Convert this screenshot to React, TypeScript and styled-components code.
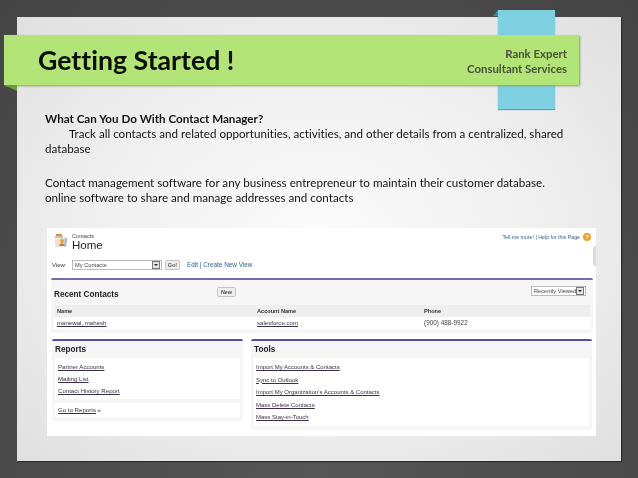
import React from "react";
import styled, { createGlobalStyle } from "styled-components";

const Global = createGlobalStyle`
  html, body { margin: 0; padding: 0; }
  body {
    width: 638px; height: 478px; overflow: hidden;
    background: radial-gradient(ellipse at 50% 100%, #565656 0%, #4c4c4c 60%, #444 100%);
    font-family: "Lato", "Liberation Sans", sans-serif;
    font-variant-ligatures: none;
  }
`;

const Slide = styled.div`
  position: relative;
  box-sizing: border-box;
  margin: 17px 0 0 17px;
  width: 604px;
  height: 444px;
  padding-top: 18px;
  background: radial-gradient(ellipse at 50% 50%, #fbfbfb 0%, #f2f2f2 45%, #e0e0e0 100%);
  box-shadow: 1px 1px 1px #2c2c2c;
`;

const BlueTab = styled.div`
  position: absolute;
  left: 481px;
  top: -7px;
  width: 57px;
  height: 99px;
  background: #7fd0e0;
  box-shadow: 0 1px 1px #6a9aa8;
  &::before {
    content: "";
    position: absolute;
    left: -5px;
    top: 0;
    border-style: solid;
    border-width: 0 0 6px 5px;
    border-color: transparent transparent #3f8fa3 transparent;
  }
`;

const Band = styled.header`
  position: relative;
  box-sizing: border-box;
  margin-left: -13px;
  width: 575px;
  height: 50px;
  padding: 0 12px 0 34px;
  display: flex;
  align-items: center;
  justify-content: space-between;
  background: #b3e477;
  box-shadow: 1px 1px 2px #8a9a78;
  &::after {
    content: "";
    position: absolute;
    left: 0;
    top: 100%;
    border-style: solid;
    border-width: 0 13px 6px 0;
    border-color: transparent #6c9a3c transparent transparent;
  }
`;

const Title = styled.h1`
  margin: 0;
  font-size: 26.7px;
  line-height: 50px;
  font-weight: 700;
  color: #0b0f05;
  white-space: pre;
  filter: blur(0.3px);
`;

const Company = styled.div`
  text-align: right;
  font-size: 11.4px;
  line-height: 15px;
  font-weight: 700;
  color: #47533a;
  padding-top: 1px;
  filter: blur(0.25px);
`;

const Copy = styled.section`
  padding: 26px 50px 0 28px;
  height: 117px;
  box-sizing: content-box;
  font-size: 11.63px;
  line-height: 15px;
  color: #141414;
  filter: blur(0.2px);
`;

const Line = styled.div<{ $indent?: boolean; $gap?: boolean; $bold?: boolean }>`
  white-space: nowrap;
  padding-left: ${(p) => (p.$indent ? "24px" : "0")};
  margin-top: ${(p) => (p.$gap ? "19px" : "0")};
  font-weight: ${(p) => (p.$bold ? 700 : 400)};
`;

const Shot = styled.main`
  position: relative;
  box-sizing: border-box;
  margin-left: 30px;
  width: 549px;
  height: 208px;
  background: #fff;
  padding: 5px 3px 0 4px;
  font-family: "Liberation Sans", sans-serif;
  font-size: 6px;
  color: #333;
  filter: blur(0.35px);
`;

const ShotHead = styled.div`
  display: flex;
  justify-content: space-between;
  height: 26px;
  padding-left: 3px;
`;

const HeadLeft = styled.div`
  display: flex;
  gap: 4px;
`;

const Crumb = styled.div`
  font-size: 5.6px;
  line-height: 7px;
  color: #444;
`;

const PageName = styled.div`
  font-size: 11.5px;
  line-height: 11px;
  color: #222;
`;

const Help = styled.div`
  display: flex;
  align-items: center;
  gap: 3px;
  height: 8px;
  padding-right: 2px;
  color: #2f5f88;
  font-size: 5.25px;
`;

const HelpDot = styled.span`
  width: 8px;
  height: 8px;
  border-radius: 50%;
  background: #eca02a;
  color: #fff;
  font-size: 6px;
  font-weight: 700;
  text-align: center;
  line-height: 8px;
`;

const ViewRow = styled.div`
  display: flex;
  align-items: center;
  height: 11px;
  padding-left: 1px;
  margin-bottom: 8px;
`;

const ViewLabel = styled.span`
  width: 20px;
  font-size: 6px;
  color: #333;
`;

const Select = styled.div<{ $w: number }>`
  box-sizing: border-box;
  display: flex;
  align-items: center;
  justify-content: space-between;
  width: ${(p) => p.$w}px;
  height: 10px;
  padding: 0 1px 0 2px;
  background: #fff;
  border: 1px solid #bbb;
  font-size: 5.7px;
  color: #444;
  white-space: nowrap;
`;

const Arrow = styled.span`
  box-sizing: border-box;
  flex: none;
  width: 8px;
  height: 8px;
  background: #e4e4e4;
  border: 1px solid #777;
  display: flex;
  align-items: center;
  justify-content: center;
  &::after {
    content: "";
    border-style: solid;
    border-width: 2px 2px 0 2px;
    border-color: #222 transparent transparent transparent;
  }
`;

const Btn = styled.span`
  box-sizing: border-box;
  display: inline-flex;
  align-items: center;
  justify-content: center;
  height: 10px;
  border: 1px solid #c4c4c4;
  border-radius: 2px;
  background: #eee;
  font-size: 5.4px;
  font-weight: 700;
  color: #555;
`;

const GoBtn = styled(Btn)`
  width: 15px;
  margin: 0 7px 0 3px;
`;

const ViewLinks = styled.span`
  color: #2f6298;
  font-size: 6.4px;
`;

const Panel = styled.section<{ $accent: string; $h: number }>`
  box-sizing: border-box;
  height: ${(p) => p.$h}px;
  background: #f6f6f6;
  border-top: 2px solid ${(p) => p.$accent};
  border-radius: 2px 2px 3px 3px;
  padding: 0 3px;
`;

const RecentBar = styled.div`
  display: grid;
  grid-template-columns: 163px 1fr auto;
  align-items: center;
  height: 25px;
  padding-right: 4px;
`;

const PanelTitle = styled.h2`
  margin: 0;
  font-size: 8.2px;
  font-weight: 700;
  color: #222;
`;

const RecentTitle = styled(PanelTitle)`
  padding-top: 3px;
`;

const NewBtn = styled(Btn)`
  width: 19px;
  margin-top: -3px;
`;

const SortWrap = styled.div`
  margin-top: -3px;
`;

const Table = styled.div`
  display: grid;
  grid-template-columns: 200px 167px 1fr;
`;

const HeadCell = styled.div`
  height: 12px;
  line-height: 12px;
  padding-left: 3px;
  background: #eeeeee;
  font-size: 5.6px;
  font-weight: 700;
  color: #333;
`;

const Cell = styled.div`
  height: 12px;
  line-height: 12px;
  padding-left: 3px;
  background: #fff;
  font-size: 6.4px;
  color: #444;
`;

const Link = styled.span`
  color: #3a3048;
  font-size: 6.1px;
  text-decoration: underline;
  white-space: nowrap;
`;

const ToolLink = styled(Link)`
  font-size: 6px;
`;

const Columns = styled.div`
  display: grid;
  grid-template-columns: 191px 341px;
  gap: 8px;
  align-items: start;
  margin: 6px 0 0 1px;
`;

const SideTitle = styled(PanelTitle)`
  height: 17px;
  line-height: 18px;
`;

const LinkBox = styled.div<{ $h: number; $step: number; $mb?: number; $left?: number }>`
  box-sizing: border-box;
  height: ${(p) => p.$h}px;
  margin-bottom: ${(p) => p.$mb ?? 0}px;
  padding: 3px 0 0 ${(p) => p.$left ?? 3}px;
  background: #fff;
  display: flex;
  flex-direction: column;
  align-items: flex-start;
  & > span {
    height: ${(p) => p.$step}px;
    line-height: ${(p) => p.$step}px;
  }
`;

const Grip = styled.div`
  position: absolute;
  right: 0;
  top: 18px;
  width: 3px;
  height: 20px;
  background: #dcdcdc;
  border-radius: 2px 0 0 2px;
`;

const ContactsIcon = () => (
  <svg width="14" height="15" viewBox="0 0 14 15">
    <rect x="1" y="5" width="12" height="9" fill="#e9e4d2" transform="rotate(-6 7 9)" />
    <rect x="2" y="1" width="6" height="2" fill="#e88b3a" />
    <rect x="1" y="3" width="8" height="2" fill="#c9c3ad" />
    <circle cx="8" cy="8" r="2" fill="#e6a23c" />
    <path d="M5 13l2-3 3 1 1 2z" fill="#d9743a" />
    <path d="M11 5l2 0-1 8-2 1z" fill="#a9b4c4" />
  </svg>
);

export default function App() {
  return (
    <>
      <Global />
      <Slide>
        <BlueTab />
        <Band>
          <Title>Getting Started !</Title>
          <Company>
            <div>Rank Expert</div>
            <div>Consultant Services</div>
          </Company>
        </Band>
        <Copy>
          <Line $bold>What Can You Do With Contact Manager?</Line>
          <Line $indent>Track all contacts and related opportunities, activities, and other details from a centralized, shared</Line>
          <Line>database</Line>
          <Line $gap>Contact management software for any business entrepreneur to maintain their customer database.</Line>
          <Line>online software to share and manage addresses and contacts</Line>
        </Copy>
        <Shot>
          <Grip />
          <ShotHead>
            <HeadLeft>
              <ContactsIcon />
              <div>
                <Crumb>Contacts</Crumb>
                <PageName>Home</PageName>
              </div>
            </HeadLeft>
            <Help>
              <span>Tell me more! | Help for this Page</span>
              <HelpDot>?</HelpDot>
            </Help>
          </ShotHead>
          <ViewRow>
            <ViewLabel>View:</ViewLabel>
            <Select $w={90}>
              <span>My Contacts</span>
              <Arrow />
            </Select>
            <GoBtn>Go!</GoBtn>
            <ViewLinks>Edit | Create New View</ViewLinks>
          </ViewRow>
          <Panel $accent="#7a68a8" $h={55}>
            <RecentBar>
              <RecentTitle>Recent Contacts</RecentTitle>
              <div><NewBtn>New</NewBtn></div>
              <SortWrap>
                <Select $w={55}>
                  <span>Recently Viewed</span>
                  <Arrow />
                </Select>
              </SortWrap>
            </RecentBar>
            <Table>
              <HeadCell>Name</HeadCell>
              <HeadCell>Account Name</HeadCell>
              <HeadCell>Phone</HeadCell>
              <Cell><Link>manewal, mahesh</Link></Cell>
              <Cell><Link>salesforce.com</Link></Cell>
              <Cell>(900) 488-9922</Cell>
            </Table>
          </Panel>
          <Columns>
            <Panel $accent="#5b4d9c" $h={82}>
              <SideTitle>Reports</SideTitle>
              <LinkBox $h={41} $step={12} $mb={4}>
                <Link>Partner Accounts</Link>
                <Link>Mailing List</Link>
                <Link>Contact History Report</Link>
              </LinkBox>
              <LinkBox $h={14} $step={8}>
                <span><Link>Go to Reports</Link> »</span>
              </LinkBox>
            </Panel>
            <Panel $accent="#5b4d9c" $h={91}>
              <SideTitle>Tools</SideTitle>
              <LinkBox $h={68} $step={12.5} $left={2}>
                <ToolLink>Import My Accounts &amp; Contacts</ToolLink>
                <ToolLink>Sync to Outlook</ToolLink>
                <ToolLink>Import My Organization's Accounts &amp; Contacts</ToolLink>
                <ToolLink>Mass Delete Contacts</ToolLink>
                <ToolLink>Mass Stay-in-Touch</ToolLink>
              </LinkBox>
            </Panel>
          </Columns>
        </Shot>
      </Slide>
    </>
  );
}
